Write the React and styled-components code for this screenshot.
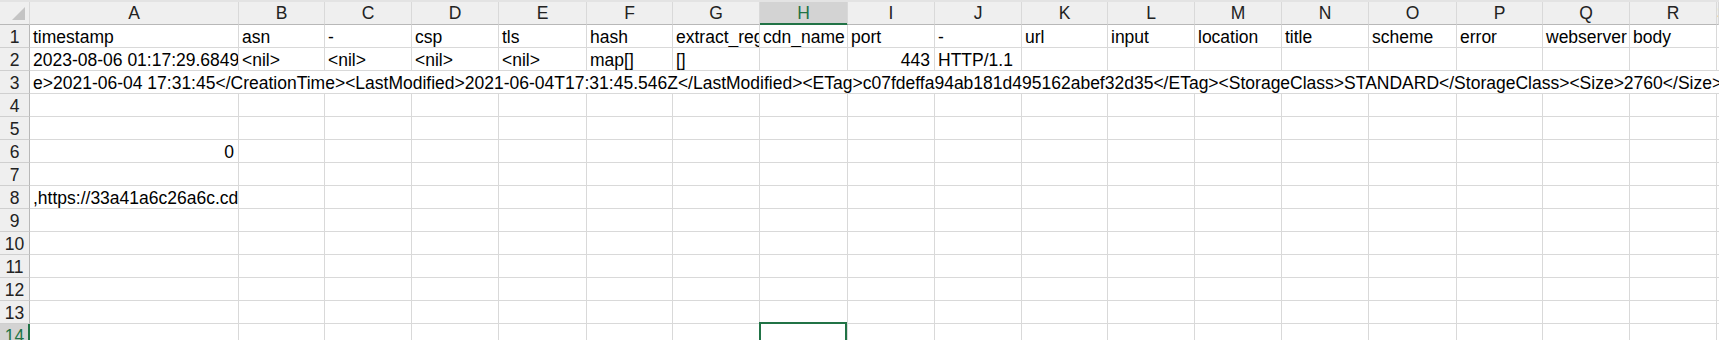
import React from "react";
import styled, { createGlobalStyle, css } from "styled-components";

const GREEN = "#217346";
const GRID = "#d9d9d9";
const HEAD_LINE = "#b8b8b8";

const COLUMNS = [
  ["A", 209], ["B", 86], ["C", 87], ["D", 87], ["E", 88], ["F", 86],
  ["G", 87], ["H", 88], ["I", 87], ["J", 87], ["K", 86], ["L", 87],
  ["M", 87], ["N", 87], ["O", 88], ["P", 86], ["Q", 87], ["R", 87], ["S", null],
];

const TEMPLATE =
  "30px " + COLUMNS.map(([, w]) => (w ? `${w}px` : "minmax(0, 1fr)")).join(" ");

const ROW3 =
  "e>2021-06-04 17:31:45</CreationTime><LastModified>2021-06-04T17:31:45.546Z</LastModified><ETag>c07fdeffa94ab181d495162abef32d35</ETag><StorageClass>STANDARD</StorageClass><Size>2760</Size><Owner><ID>1252</ID></Owner>";

// rows: array of cells keyed by column letter; value string or {v, right}
const ROWS = [
  {
    A: "timestamp", B: "asn", C: "-", D: "csp", E: "tls", F: "hash",
    G: "extract_regex", H: "cdn_name", I: "port", J: "-", K: "url",
    L: "input", M: "location", N: "title", O: "scheme", P: "error",
    Q: "webserver", R: "body",
  },
  {
    A: "2023-08-06 01:17:29.684907", B: "<nil>", C: "<nil>", D: "<nil>",
    E: "<nil>", F: "map[]", G: "[]", I: { v: "443", right: true }, J: "HTTP/1.1",
  },
  { span: ROW3 },
  {},
  {},
  { A: { v: "0", right: true } },
  {},
  { A: ",https://33a41a6c26a6c.cdn.example" },
  {}, {}, {}, {}, {}, {},
];

const SELECTED_COL = "H";
const SELECTED_ROW = 14;

const GlobalStyle = createGlobalStyle`
  html, body {
    margin: 0;
    padding: 0;
    background: #ffffff;
    overflow: hidden;
  }
  body {
    width: 1719px;
    height: 340px;
    font-family: "Liberation Sans", Arial, sans-serif;
  }
`;

const Sheet = styled.div`
  width: 1719px;
  height: 340px;
  overflow: hidden;
  font-family: "Liberation Sans", Arial, sans-serif;
  font-size: 17.5px;
  color: #000;
`;

const HeaderRow = styled.div`
  display: grid;
  grid-template-columns: ${TEMPLATE};
  border-top: 2px solid #e3e3e3;
  background: #efefef;
`;

const Corner = styled.div`
  height: 23px;
  box-sizing: border-box;
  border-right: 1px solid ${GRID};
  border-bottom: 1px solid ${HEAD_LINE};
  display: flex;
  align-items: flex-start;
  justify-content: flex-end;
  padding: 5px 3px 0 0;
`;

const ColHeader = styled.div`
  height: 23px;
  box-sizing: border-box;
  border-right: 1px solid ${GRID};
  border-bottom: 1px solid ${HEAD_LINE};
  padding-top: 1px;
  line-height: 20px;
  text-align: center;
  color: #222;
  overflow: hidden;
  white-space: nowrap;
  ${(p) =>
    p.$selected &&
    css`
      background: #d3d3d3;
      color: ${GREEN};
      border-bottom-color: ${GREEN};
      box-shadow: inset 0 -1px 0 ${GREEN};
    `}
`;

const Row = styled.div`
  display: grid;
  grid-template-columns: ${TEMPLATE};
`;

const RowHeader = styled.div`
  height: 23px;
  box-sizing: border-box;
  background: #efefef;
  border-right: 1px solid ${HEAD_LINE};
  border-bottom: 1px solid #cfcfcf;
  padding-top: 2px;
  line-height: 20px;
  text-align: center;
  color: #222;
  ${(p) =>
    p.$selected &&
    css`
      background: #d3d3d3;
      color: ${GREEN};
      border-right-color: ${GREEN};
      box-shadow: inset -1px 0 0 ${GREEN};
    `}
`;

const Cell = styled.div`
  position: relative;
  height: 23px;
  box-sizing: border-box;
  border-right: 1px solid ${GRID};
  border-bottom: 1px solid ${GRID};
  padding: 2px 4px 0 3px;
  line-height: 20px;
  white-space: nowrap;
  overflow: hidden;
  text-align: ${(p) => (p.$right ? "right" : "left")};
  ${(p) =>
    p.$span &&
    css`
      grid-column: 2 / -1;
      border-right: none;
    `}
  ${(p) =>
    p.$active &&
    css`
      overflow: visible;
      &::after {
        content: "";
        position: absolute;
        top: -2px;
        left: -1px;
        right: 0;
        bottom: -2px;
        border: 2px solid ${GREEN};
        pointer-events: none;
      }
    `}
`;

function CornerTriangle() {
  return (
    <svg width="14" height="14" viewBox="0 0 14 14" aria-hidden="true">
      <polygon points="13,0 13,13 0,13" fill="#c4c4c4" />
    </svg>
  );
}

export default function App() {
  return (
    <>
      <GlobalStyle />
      <Sheet>
        <HeaderRow>
          <Corner>
            <CornerTriangle />
          </Corner>
          {COLUMNS.map(([c]) => (
            <ColHeader key={c} $selected={c === SELECTED_COL}>
              {c}
            </ColHeader>
          ))}
        </HeaderRow>
        {ROWS.map((row, i) => {
          const n = i + 1;
          return (
            <Row key={n}>
              <RowHeader $selected={n === SELECTED_ROW}>{n}</RowHeader>
              {row.span ? (
                <Cell $span>{row.span}</Cell>
              ) : (
                COLUMNS.map(([c]) => {
                  const raw = row[c];
                  const val = raw && typeof raw === "object" ? raw.v : raw;
                  const right = raw && typeof raw === "object" && raw.right;
                  return (
                    <Cell
                      key={c}
                      $right={right}
                      $active={n === SELECTED_ROW && c === SELECTED_COL}
                    >
                      {val}
                    </Cell>
                  );
                })
              )}
            </Row>
          );
        })}
      </Sheet>
    </>
  );
}
